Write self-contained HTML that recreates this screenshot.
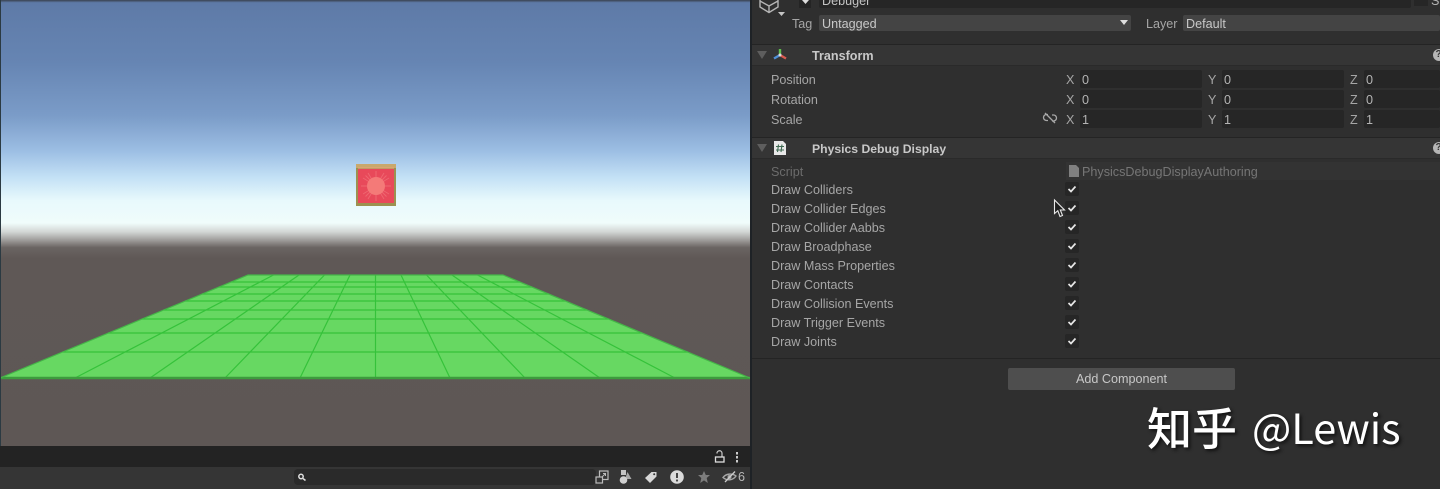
<!DOCTYPE html>
<html lang="zh">
<head>
<meta charset="utf-8">
<style>
html,body{margin:0;padding:0;background:#2f2f2f;}
#r{position:relative;width:1440px;height:489px;overflow:hidden;background:#2f2f2f;font-family:"Liberation Sans","Noto Sans CJK SC",sans-serif;font-size:12.6px;color:#b4b4b4;filter:blur(0.35px);}
#r div{position:absolute;}
.t{white-space:nowrap;line-height:17px;height:17px;margin-top:1px;}
.f{background:#262626;height:18px;border-radius:2px;}
.cb{left:1065px;width:14px;height:14px;background:#262626;border-radius:2px;}
.h{left:752px;width:688px;background:#353535;border-top:1px solid #242424;border-bottom:1px solid #2a2a2a;}
.b{font-weight:bold;color:#c8c8c8;}
.a{color:#a6a6a6;}
.q{left:1433px;width:12px;height:12px;border-radius:50%;background:#b5b5b5;color:#333;font-size:10px;font-weight:bold;line-height:12px;text-align:center;text-indent:-1px;}
svg{position:absolute;overflow:visible;}
</style>
</head>
<body>
<div id="r">
<div style="left:0;top:0;width:751px;height:446px;background:linear-gradient(180deg,#39414f 0,#5e7aa7 0.6%,#6685b3 14%,#7b9cc8 26%,#9dbfe4 34%,#c5e2f6 40%,#e8f9fc 45%,#f0fcfb 50%,#d2d6d4 52%,#9a9795 54%,#6a6462 55.500%,#5f5856 58%,#5e5755 100%);"></div>
<svg style="left:0;top:0" width="751" height="446" viewBox="0 0 751 446">
<polygon points="248,275 503,275 750,378 0,378" fill="#67d862"/>
<g stroke="#35c23a" stroke-width="1.200" fill="none">
<path d="M273.500 275L75 378M299 275L150 378M324.500 275L225 378M350 275L300 378M375.500 275V378M401 275L450 378M426.500 275L525 378M452 275L600 378M477.500 275L675 378"/>
<path d="M231 282H520M219 287H532M202 294H549M185 301H565M164 310H587M142 319H608M108 333H642M63 352H688"/>
</g>
<path d="M0 378H750" stroke="#3d9c3d" stroke-width="2.500"/>
<path d="M0 378L248 275H503L750 378" stroke="#45b548" stroke-width="1.200" fill="none"/>
<rect x="356" y="164" width="40" height="42" fill="#9c9150"/>
<rect x="356" y="164" width="40" height="4" fill="#c9a86c"/>
<rect x="358" y="169" width="36" height="34" fill="#e8495a"/>
<path d="M358 168H394" stroke="#e9a47a" stroke-width="1"/>
<g stroke="#ee6670" stroke-width="1"><path d="M376 171V201M361 186H391M365.500 175.500L386.500 196.500M386.500 175.500L365.500 196.500M368 173L384 199M384 173L368 199M363 178L389 194M389 178L363 194"/></g>
<circle cx="376" cy="186" r="9" fill="#f47a78"/>
</svg>
<div style="left:0;top:0;width:1px;height:446px;background:#2b3a42;"></div>
<div style="left:0;top:446px;width:751px;height:21px;background:#232323;"></div>
<div style="left:0;top:467px;width:751px;height:22px;background:#353535;"></div>
<div style="left:294px;top:469px;width:302px;height:16px;background:#2a2a2a;border-radius:4px;"></div>
<svg style="left:296px;top:471px" width="12" height="12" viewBox="0 0 12 12"><circle cx="5" cy="5.500" r="2.200" stroke="#ddd" stroke-width="1.500" fill="none"/><path d="M7 7.500L9.500 9.500" stroke="#ddd" stroke-width="1.500"/></svg>
<svg style="left:714px;top:450px" width="12" height="14" viewBox="0 0 12 14"><path d="M3 3.500A2.500 2.500 0 0 1 8 3V6.500" stroke="#ccc" stroke-width="1.200" fill="none"/><rect x="1.500" y="7" width="8.500" height="5" fill="none" stroke="#ddd" stroke-width="1.300"/></svg>
<svg style="left:733px;top:450px" width="8" height="14" viewBox="0 0 8 14"><path d="M4 2V4.500M4 6V8.500M4 10V12.500" stroke="#ccc" stroke-width="2"/></svg>
<svg style="left:595px;top:469px" width="14" height="16" viewBox="0 0 14 16"><rect x="4.500" y="2" width="8.500" height="8.500" fill="none" stroke="#bbb" stroke-width="1.200"/><rect x="1" y="8" width="6.500" height="6" fill="#353535" stroke="#bbb" stroke-width="1.200"/><path d="M7 8L10.500 4.500M8 4.500H10.500V7" stroke="#bbb" fill="none"/></svg>
<svg style="left:618px;top:469px" width="16" height="16" viewBox="0 0 16 16"><path d="M3 1H8V6H3Z" fill="#c4c4c4"/><path d="M9.500 3L13.500 10H7Z" fill="#a8a8a8"/><circle cx="5.500" cy="11" r="3.800" fill="#d0d0d0"/></svg>
<svg style="left:644px;top:470px" width="14" height="14" viewBox="0 0 14 14"><path d="M1 8L7.500 2H12.500V6.500L6 13Z" fill="#d8d8d8"/><circle cx="10.200" cy="4.300" r="1" fill="#353535"/></svg>
<svg style="left:670px;top:470px" width="14" height="14" viewBox="0 0 14 14"><circle cx="7" cy="7" r="6.800" fill="#dadada"/><path d="M7 3V8" stroke="#444" stroke-width="2"/><circle cx="7" cy="10.500" r="1.100" fill="#444"/></svg>
<svg style="left:697px;top:470px" width="14" height="14" viewBox="0 0 14 14"><path d="M7 1L8.800 5H13L9.700 8L10.800 13L7 10.400L3.200 13L4.300 8L1 5H5.200Z" fill="#7d7d7d"/></svg>
<svg style="left:722px;top:470px" width="15" height="14" viewBox="0 0 15 14"><path d="M1 7.500C4 3.500 10 3 14 6C11 10.500 5 11 1 7.500Z" fill="none" stroke="#a8a8a8" stroke-width="1.400"/><circle cx="7.500" cy="7" r="2" fill="#a8a8a8"/><path d="M3 12L13 1.500" stroke="#ccc" stroke-width="1.300"/></svg>
<div class="t" style="left:738px;top:468px;color:#b8b8b8;">6</div>

<div style="left:750px;top:0;width:2px;height:489px;background:#1e2226;"></div>
<div style="left:752px;top:0;width:688px;height:489px;background:#2f2f2f;"></div>

<svg style="left:758px;top:0" width="28" height="18" viewBox="0 0 28 18"><path d="M2 -4V7L11 12.500L20 7V-4M2 1L11 6L20 1M11 6V12.500" fill="none" stroke="#b5b5b5" stroke-width="1.400"/><path d="M20 12H27L23.500 16Z" fill="#c5c5c5"/></svg>
<div style="left:799px;top:-3px;width:12px;height:11px;background:#242424;"></div>
<svg style="left:802px;top:0" width="7" height="5" viewBox="0 0 7 5"><path d="M0 0H7L3.500 4Z" fill="#ddd"/></svg>
<div style="left:819px;top:-8px;width:592px;height:16px;background:#262626;border-radius:2px;"></div>
<div class="t" style="left:822px;top:-8px;color:#c4c4c4;">Debuger</div>
<div style="left:1414px;top:-6px;width:14px;height:12px;background:#262626;"></div>
<div class="t" style="left:1431px;top:-8px;">S</div>
<div class="t a" style="left:792px;top:15px;">Tag</div>
<div style="left:819px;top:15px;width:312px;height:16px;background:#444;border-radius:2px;"></div>
<div class="t" style="left:822px;top:15px;color:#c8c8c8;">Untagged</div>
<svg style="left:1120px;top:20px" width="8" height="6" viewBox="0 0 8 6"><path d="M0 0H8L4 5Z" fill="#ddd"/></svg>
<div class="t a" style="left:1146px;top:15px;">Layer</div>
<div style="left:1183px;top:15px;width:257px;height:16px;background:#444;border-radius:2px;"></div>
<div class="t" style="left:1186px;top:15px;color:#c8c8c8;">Default</div>

<div class="h" style="top:44px;height:20px;"></div>
<svg style="left:757px;top:51px" width="10" height="9" viewBox="0 0 10 9"><path d="M0 0H10L5 8Z" fill="#5e5e5e"/></svg>
<svg style="left:772px;top:47px" width="18" height="16" viewBox="0 0 18 16"><path d="M8 8V2" stroke="#5fc04f" stroke-width="2.400"/><path d="M8 8L2 11.500" stroke="#4f8fd8" stroke-width="2.400"/><path d="M8 8L14 11.500" stroke="#d85a50" stroke-width="2.400"/><circle cx="8" cy="8" r="1.500" fill="#ddd"/></svg>
<div class="t b" style="left:812px;top:47px;">Transform</div>
<div class="q" style="top:49px;">?</div>

<div class="t a" style="left:771px;top:71px;">Position</div>
<div class="t a" style="left:771px;top:91px;">Rotation</div>
<div class="t a" style="left:771px;top:111px;">Scale</div>
<svg style="left:1043px;top:112px" width="14" height="12" viewBox="0 0 14 12"><path d="M5 2.500H3.500A3 3 0 0 0 3.500 8.500H5M9 3H10.500A3 3 0 0 1 10.500 9H9M2 1L12 11" fill="none" stroke="#a8a8a8" stroke-width="1.300"/></svg>

<div class="t a" style="left:1066px;top:71px;">X</div><div class="f" style="left:1080px;top:70px;width:122px;"></div><div class="t" style="left:1082px;top:71px;">0</div>
<div class="t a" style="left:1208px;top:71px;">Y</div><div class="f" style="left:1222px;top:70px;width:122px;"></div><div class="t" style="left:1224px;top:71px;">0</div>
<div class="t a" style="left:1350px;top:71px;">Z</div><div class="f" style="left:1364px;top:70px;width:76px;"></div><div class="t" style="left:1366px;top:71px;">0</div>
<div class="t a" style="left:1066px;top:91px;">X</div><div class="f" style="left:1080px;top:90px;width:122px;"></div><div class="t" style="left:1082px;top:91px;">0</div>
<div class="t a" style="left:1208px;top:91px;">Y</div><div class="f" style="left:1222px;top:90px;width:122px;"></div><div class="t" style="left:1224px;top:91px;">0</div>
<div class="t a" style="left:1350px;top:91px;">Z</div><div class="f" style="left:1364px;top:90px;width:76px;"></div><div class="t" style="left:1366px;top:91px;">0</div>
<div class="t a" style="left:1066px;top:111px;">X</div><div class="f" style="left:1080px;top:110px;width:122px;"></div><div class="t" style="left:1082px;top:111px;">1</div>
<div class="t a" style="left:1208px;top:111px;">Y</div><div class="f" style="left:1222px;top:110px;width:122px;"></div><div class="t" style="left:1224px;top:111px;">1</div>
<div class="t a" style="left:1350px;top:111px;">Z</div><div class="f" style="left:1364px;top:110px;width:76px;"></div><div class="t" style="left:1366px;top:111px;">1</div>

<div class="h" style="top:137px;height:20px;"></div>
<svg style="left:757px;top:144px" width="10" height="9" viewBox="0 0 10 9"><path d="M0 0H10L5 8Z" fill="#5e5e5e"/></svg>
<svg style="left:773px;top:140px" width="14" height="16" viewBox="0 0 14 16"><path d="M1 1H10L13 4V15H1Z" fill="#e8e8e8"/><path d="M5.500 4.500L4.500 12M9 4.500L8 12M3 6.500H11M3 10H11" stroke="#3f6a52" stroke-width="1.100"/></svg>
<div class="t b" style="left:812px;top:140px;font-size:12.2px;">Physics Debug Display</div>
<div class="q" style="top:142px;">?</div>

<div class="t" style="left:771px;top:163px;color:#6c6c6c;">Script</div>
<div style="left:1066px;top:162px;width:374px;height:18px;background:#333;"></div>
<svg style="left:1069px;top:165px" width="10" height="12" viewBox="0 0 10 12"><path d="M0 0H7L10 3V12H0Z" fill="#808080"/></svg>
<div class="t" style="left:1082px;top:163px;color:#767676;">PhysicsDebugDisplayAuthoring</div>

<div class="t a" style="left:771px;top:181px;">Draw Colliders</div><div class="cb" style="top:182px;"></div>
<div class="t a" style="left:771px;top:200px;">Draw Collider Edges</div><div class="cb" style="top:201px;"></div>
<div class="t a" style="left:771px;top:219px;">Draw Collider Aabbs</div><div class="cb" style="top:220px;"></div>
<div class="t a" style="left:771px;top:238px;">Draw Broadphase</div><div class="cb" style="top:239px;"></div>
<div class="t a" style="left:771px;top:257px;">Draw Mass Properties</div><div class="cb" style="top:258px;"></div>
<div class="t a" style="left:771px;top:276px;">Draw Contacts</div><div class="cb" style="top:277px;"></div>
<div class="t a" style="left:771px;top:295px;">Draw Collision Events</div><div class="cb" style="top:296px;"></div>
<div class="t a" style="left:771px;top:314px;">Draw Trigger Events</div><div class="cb" style="top:315px;"></div>
<div class="t a" style="left:771px;top:333px;">Draw Joints</div><div class="cb" style="top:334px;"></div>
<svg style="left:1065px;top:182px" width="14" height="166" viewBox="0 0 14 166" fill="none" stroke="#e6e6e6" stroke-width="1.700">
<path d="M3.500 7L6 9.500L10.500 4.500"/><path d="M3.500 26L6 28.500L10.500 23.500"/><path d="M3.500 45L6 47.500L10.500 42.500"/><path d="M3.500 64L6 66.500L10.500 61.500"/><path d="M3.500 83L6 85.500L10.500 80.500"/><path d="M3.500 102L6 104.500L10.500 99.500"/><path d="M3.500 121L6 123.500L10.500 118.500"/><path d="M3.500 140L6 142.500L10.500 137.500"/><path d="M3.500 159L6 161.500L10.500 156.500"/>
</svg>
<svg style="left:1053px;top:199px" width="14" height="20" viewBox="0 0 14 20"><path d="M1.500 1V14.500L4.800 11.700L7 17.500L9.500 16.500L7.300 11H11.500Z" fill="#1f1f1f" stroke="#e8e8e8" stroke-width="1.100"/></svg>

<div style="left:752px;top:358px;width:688px;height:1px;background:#242424;"></div>
<div style="left:1008px;top:368px;width:227px;height:22px;background:#4e4e4e;border-radius:2px;text-align:center;line-height:23px;color:#c8c8c8;">Add Component</div>
<div class="t" style="left:1147px;top:397px;height:56px;line-height:56px;font-size:45px;font-weight:500;color:#fff;text-shadow:2px 2px 3px #111;font-family:'Noto Sans CJK SC',sans-serif;">知乎</div>
<div class="t" style="left:1252px;top:397px;height:56px;line-height:56px;font-size:41.5px;color:#fff;text-shadow:2px 2px 3px #111;font-family:'Noto Sans CJK SC','Liberation Sans',sans-serif;">@Lewis</div>
</div>
</body>
</html>
